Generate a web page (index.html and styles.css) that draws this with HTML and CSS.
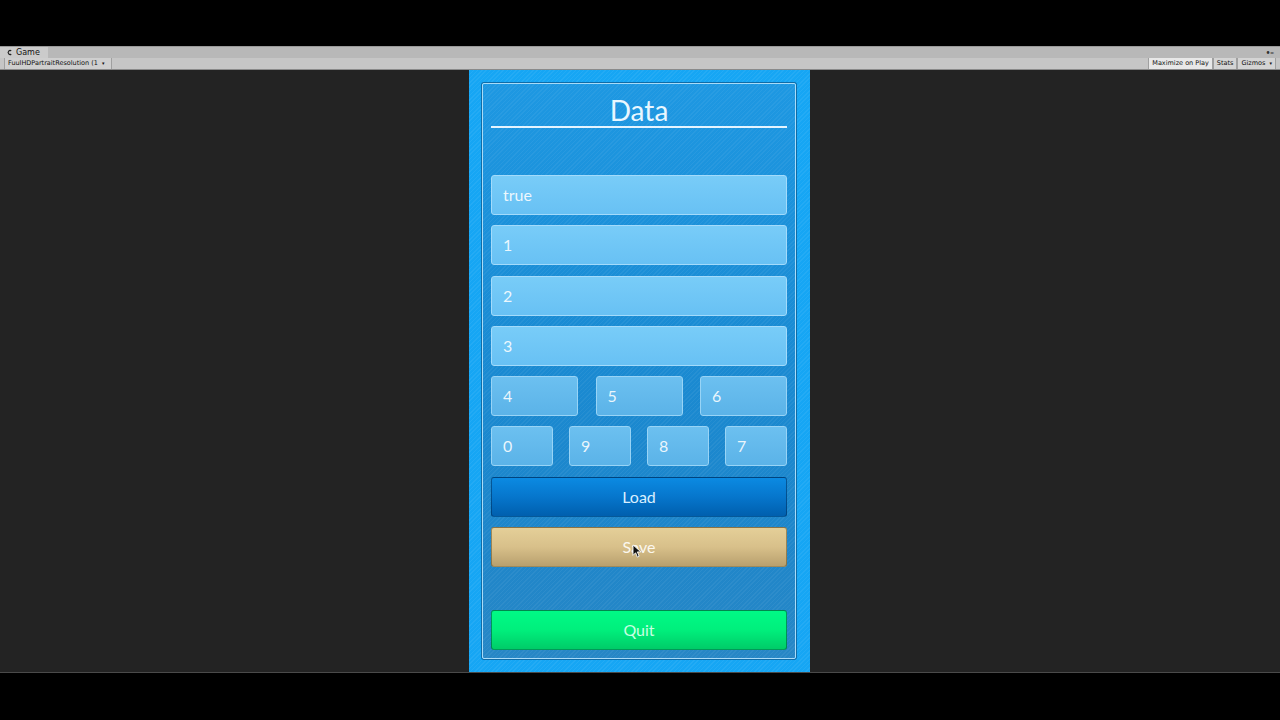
FILE: index.html
```html
<!DOCTYPE html>
<html lang="en">
<head>
    <meta charset="UTF-8">
    <meta name="viewport" content="width=device-width, initial-scale=1.0">
    <title>Game</title>
    <link rel="stylesheet" href="styles.css">
</head>
<body>
    <div class="letterbox-top"></div>
    <div class="editor">
        <div class="tab-strip">
            <div class="tab">
                <svg class="tab-icon" viewBox="0 0 8 8" width="7" height="7">
                    <path d="M6.5 1.5 A3 3 0 1 0 6.5 6.5 L5.4 5.3 A1.5 1.5 0 1 1 5.4 2.7 Z" fill="#222"/>
                </svg>
                <span>Game</span>
            </div>
            <div class="tab-menu">&#8226;=</div>
        </div>
        <div class="toolbar">
            <div class="tool-btn dropdown">FuulHDPartraitResolution (1 <span class="caret">&#9662;</span></div>
            <div class="toolbar-right">
                <div class="tool-btn on">Maximize on Play</div>
                <div class="tool-btn">Stats</div>
                <div class="tool-btn">Gizmos <span class="caret">&#9662;</span></div>
            </div>
        </div>
        <div class="game-view">
            <div class="phone">
                <div class="panel">
                    <h1 class="title">Data</h1>
                    <div class="fields">
                        <div class="field">true</div>
                        <div class="field">1</div>
                        <div class="field">2</div>
                        <div class="field">3</div>
                        <div class="row row-3">
                            <div class="field small">4</div>
                            <div class="field small">5</div>
                            <div class="field small">6</div>
                        </div>
                        <div class="row row-4">
                            <div class="field small">0</div>
                            <div class="field small">9</div>
                            <div class="field small">8</div>
                            <div class="field small">7</div>
                        </div>
                        <button class="btn btn-load">Load</button>
                        <button class="btn btn-save">Save</button>
                    </div>
                    <button class="btn btn-quit">Quit</button>
                </div>
            </div>
            <svg class="cursor" viewBox="0 0 10 16" width="9" height="14">
                <path d="M1 1 L1 13 L4 10 L6 15 L8 14 L6 9 L10 9 Z" fill="#111" stroke="#fff" stroke-width="1"/>
            </svg>
        </div>
    </div>
</body>
</html>
```

FILE: styles.css
```css
body {
    margin: 0;
    padding: 0;
    background-color: #000;
    font-family: Lato, "Open Sans", sans-serif;
    width: 1280px;
    height: 720px;
    overflow: hidden;
}

.letterbox-top {
    height: 46px;
    background-color: #000;
}

.editor {
    background-color: #c2c2c2;
}

.tab-strip {
    height: 12px;
    display: flex;
    justify-content: space-between;
    align-items: flex-end;
    background-color: #b8b8b8;
    border-top: 1px solid #9a9a9a;
    box-sizing: border-box;
}

.tab {
    display: flex;
    align-items: center;
    gap: 3px;
    height: 11px;
    padding: 0 8px 0 6px;
    background-color: #cbcbcb;
    font-family: "DejaVu Sans", sans-serif;
    font-size: 8px;
    color: #111;
}

.tab-menu {
    font-size: 7px;
    color: #333;
    padding-right: 6px;
    line-height: 11px;
}

.toolbar {
    height: 12px;
    display: flex;
    justify-content: space-between;
    background-color: #c6c6c6;
    border-bottom: 1px solid #8a8a8a;
    box-sizing: border-box;
    padding: 0 4px;
}

.toolbar-right {
    display: flex;
}

.tool-btn {
    font-family: "DejaVu Sans", sans-serif;
    font-size: 6.5px;
    color: #111;
    line-height: 11px;
    padding: 0 3px;
    border-left: 1px solid #a0a0a0;
    border-right: 1px solid #a0a0a0;
    background-color: #d4d4d4;
}

.tool-btn.on {
    background-color: #e8e8e8;
}

.tool-btn.dropdown {
    width: 100px;
    background-color: #cfcfcf;
}

.caret {
    font-size: 5px;
    margin-left: 2px;
}

.game-view {
    position: relative;
    height: 603px;
    display: flex;
    justify-content: center;
    background-color: #232323;
    border-bottom: 1px solid #4a4a4a;
    box-sizing: border-box;
}

.phone {
    width: 341px;
    margin-right: 1px;
    box-sizing: border-box;
    padding: 13px 14px 13px 13px;
    background-color: #16a6f4;
    background-image: repeating-linear-gradient(135deg, rgba(255, 255, 255, 0.06) 0 1px, transparent 1px 3px);
}

.panel {
    display: flex;
    flex-direction: column;
    height: 100%;
    box-sizing: border-box;
    padding: 10px 8px 7px 8px;
    border: 1px solid #a9dcf8;
    border-radius: 2px;
    box-shadow: 0 0 0 1px #0f6ca8;
    background: repeating-linear-gradient(135deg, rgba(255, 255, 255, 0.05) 0 1px, transparent 1px 3px),
        linear-gradient(180deg, #1e98e2 0%, #1a8bd3 45%, #1d86cb 75%, #2787c6 100%);
}

.title {
    margin: 0;
    height: 32px;
    line-height: 32px;
    font-size: 28px;
    font-weight: 400;
    text-align: center;
    color: #e9f7ff;
    border-bottom: 2px solid #e4f4ff;
}

.fields {
    display: flex;
    flex-direction: column;
    gap: 10.25px;
    margin-top: 47px;
}

.field {
    height: 40px;
    box-sizing: border-box;
    padding: 0 11px;
    line-height: 38px;
    font-size: 16px;
    color: rgba(255, 255, 255, 0.88);
    border: 1px solid #a3dbfb;
    border-radius: 3px;
    background: linear-gradient(180deg, #78ccf8 0%, #68c1f4 100%);
}

.field.small {
    background: linear-gradient(180deg, #6cc0f0 0%, #5bb3e8 100%);
    border-color: #98d4f6;
}

.row {
    display: grid;
}

.row-3 {
    grid-template-columns: repeat(3, 87px);
    justify-content: space-between;
}

.row-4 {
    grid-template-columns: repeat(4, 62px);
    justify-content: space-between;
}

.btn {
    height: 40px;
    width: 100%;
    border: 1px solid rgba(0, 40, 80, 0.5);
    border-radius: 3px;
    font-family: Lato, "Open Sans", sans-serif;
    font-size: 16px;
    color: #f2f8ff;
    padding: 0;
}

.btn-load {
    background: linear-gradient(180deg, #0b8ae2 0%, #0676cc 50%, #005fae 100%);
    color: #d9efff;
}

.btn-save {
    background: linear-gradient(180deg, #e4cf98 0%, #d8c08a 50%, #b8a06e 100%);
    border-color: rgba(90, 70, 30, 0.5);
    color: #fbf7ee;
}

.btn-quit {
    margin-top: 43px;
    background: linear-gradient(180deg, #00fa86 0%, #00ef7c 50%, #00cc68 100%);
    border-color: rgba(0, 90, 60, 0.6);
    color: #c9ffe3;
}

.cursor {
    position: absolute;
    left: 632px;
    top: 474px;
}
```
